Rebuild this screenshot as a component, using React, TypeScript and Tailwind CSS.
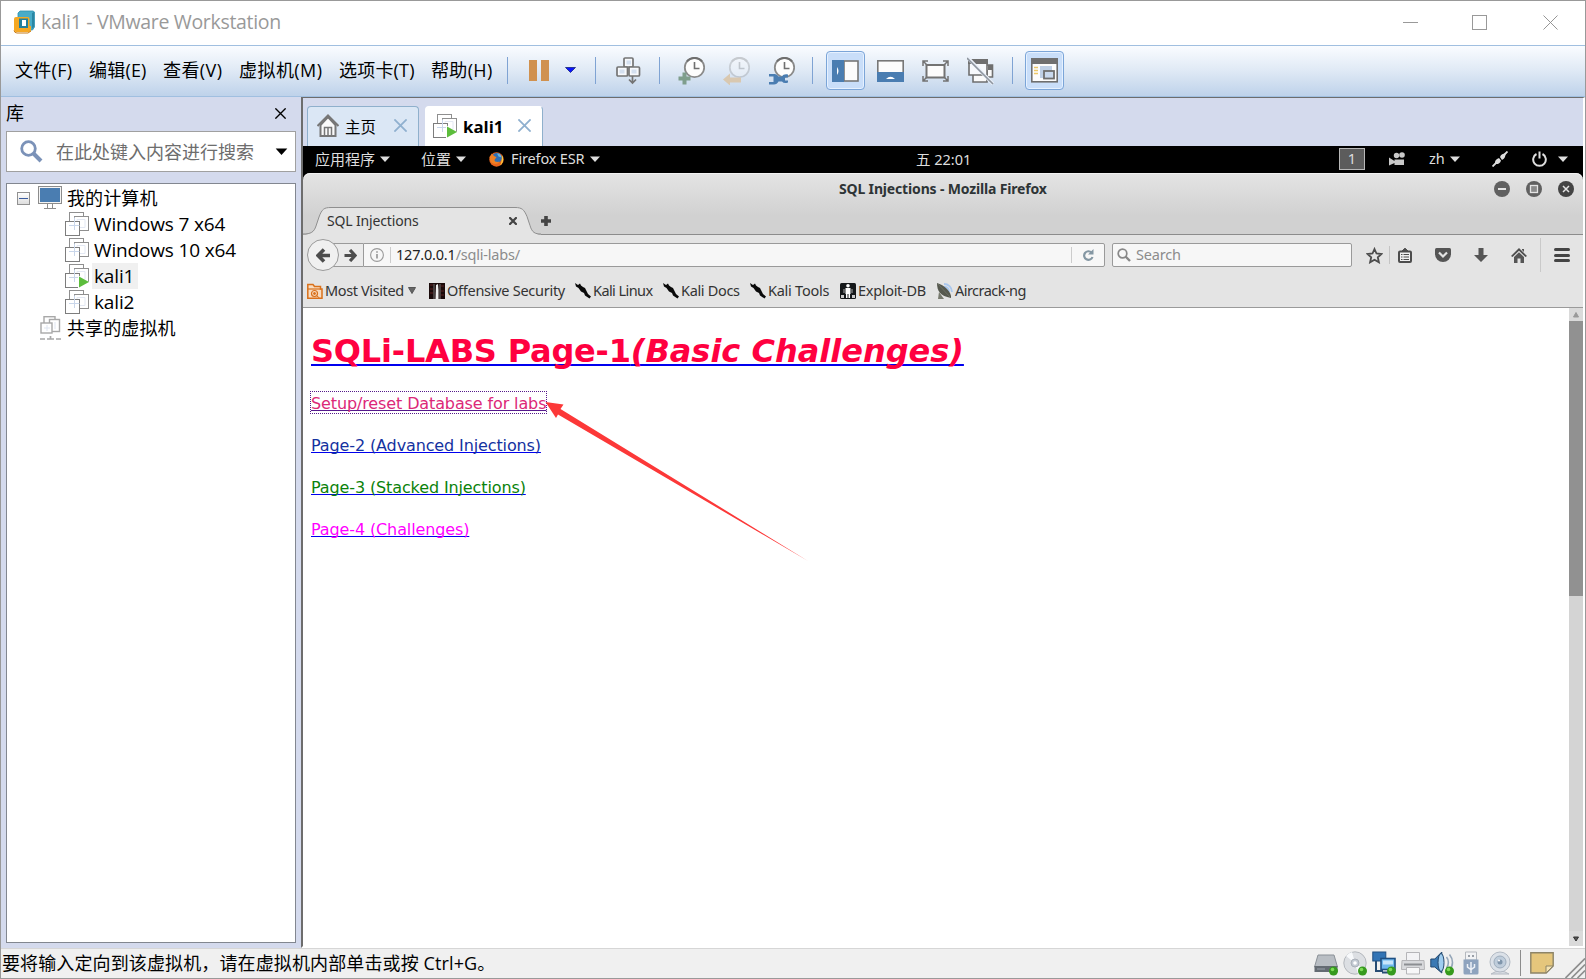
import type { ReactNode } from 'react';
import clsx from 'clsx';

const UI = "font-['Open_Sans','Noto_Sans_CJK_SC',sans-serif]";
const GTK = "font-['Noto_Sans','Noto_Sans_CJK_SC',sans-serif]";

interface IconProps {
  className?: string;
}

function Caret({ className }: IconProps) {
  return (
    <svg viewBox="0 0 10 6" className={clsx('h-[6px] w-[10px] shrink-0', className)}>
      <path d="M0 0.5h10L5 6z" fill="currentColor" />
    </svg>
  );
}

function VmwareLogo() {
  return (
    <svg viewBox="0 0 22 24" className="h-6 w-[22px] shrink-0">
      <path d="M7 1h13l1.500 1v15l-2 3H5V3z" fill="#48acc9" stroke="#2f8fae" strokeWidth="0.800" />
      <path d="M19 3l2-1v15l-2 2z" fill="#2a86a3" />
      <path d="M1 9q0-2 2-2h3v11h9v-2h3v4q0 2-2 2H3q-2 0-2-2z" fill="#f5a823" />
      <path d="M5 7h9.500q2 0 2 2v8h-3v-7H5z" fill="#f5a823" />
      <path d="M1 20.500q.5 2.500 3 2.500h11l3-2" fill="none" stroke="#c97c17" />
      <rect x="6" y="8.500" width="9" height="9.500" fill="#1f7f9e" />
      <rect x="9" y="10" width="4" height="6" fill="#fff" />
    </svg>
  );
}

function VmIcon({ running, className }: IconProps & { running?: boolean }) {
  return (
    <svg viewBox="0 0 24 24" className={clsx('h-6 w-6 shrink-0', className)}>
      <rect x="4.500" y="0.500" width="14" height="13" fill="#fff" stroke="#8f8f8f" />
      <rect x="9.500" y="4.500" width="14" height="14" fill="#fff" stroke="#8f8f8f" />
      <path d="M12 7.500h8v8h-8z" fill="none" stroke="#e3e8f3" />
      <rect x="0.500" y="9.500" width="14" height="14" fill="#fff" stroke="#7d7d7d" />
      <path d="M9.500 5.500v12.500M4 13.500h10.500" stroke="#c9d6ea" fill="none" />
      {running && <path d="M13 11v13h11v-6z" fill="#fff" />}
      {running && <path d="M14 12.500v11l10-5.500z" fill="#5cbd3c" />}
    </svg>
  );
}

function SharedIcon() {
  return (
    <svg viewBox="0 0 22 24" className="h-6 w-[22px] shrink-0" fill="#fff" stroke="#a8a8a8">
      <rect x="4" y="0.700" width="11" height="10" strokeWidth="1.400" />
      <rect x="9.500" y="3.500" width="10" height="12" strokeWidth="1.400" />
      <rect x="1" y="7" width="11" height="10" strokeWidth="1.400" />
      <path d="M7 9v6M4 12h6M15 6v7" stroke="#dfe5f0" />
      <path d="M10.500 20v3M0 23h5M7 23h7M16 23h5" strokeWidth="1.700" />
    </svg>
  );
}

function MonitorIcon() {
  return (
    <svg viewBox="0 0 24 24" className="ml-2 h-6 w-6 shrink-0">
      <rect x="0.500" y="0.500" width="23" height="17" fill="#f4f4f4" stroke="#8c8c8c" />
      <rect x="2" y="2" width="20" height="14" fill="#4a7db1" />
      <path d="M9.500 18v4M14.500 18v4M6 22.500h12" stroke="#8c8c8c" fill="none" />
    </svg>
  );
}

function Cross({ className, width = 1 }: IconProps & { width?: number }) {
  return (
    <svg viewBox="0 0 16 16" className={clsx('shrink-0', className)}>
      <path d="M0.500 0.500l15 15M15.500 0.500l-15 15" stroke="currentColor" strokeWidth={width} />
    </svg>
  );
}

function TitleBar() {
  return (
    <div className="flex h-[44px] shrink-0 items-center bg-white pb-[2px] pl-3">
      <VmwareLogo />
      <span className="ml-[6px] w-[300px] text-[19.500px] leading-6 tracking-[-0.320px] whitespace-nowrap text-[#999]">
        kali1 - VMware Workstation
      </span>
      <div className="ml-auto flex items-center pr-[27px] text-[#8f8f8f]">
        <div className="h-px w-[15px] bg-[#999]" />
        <div className="ml-[54px] h-[15px] w-[15px] border border-[#999]" />
        <Cross className="ml-[56px] h-[15px] w-[15px]" />
      </div>
    </div>
  );
}

const menus = [
  { label: '文件(F)', box: 'w-[74px] tracking-[0.300px]' },
  { label: '编辑(E)', box: 'w-[74px] tracking-[0.200px]' },
  { label: '查看(V)', box: 'w-[76px] tracking-[0.400px]' },
  { label: '虚拟机(M)', box: 'w-[100px] tracking-[0.450px]' },
  { label: '选项卡(T)', box: 'w-[92px] tracking-[0.200px]' },
  { label: '帮助(H)', box: 'w-[76px] tracking-[0.350px]' },
];

function ToolSeparator() {
  return <div className="h-[27px] w-px shrink-0 bg-[#7fa3d3]" />;
}

function Clock({ faded, children }: { faded?: boolean; children: ReactNode }) {
  return (
    <svg viewBox="0 0 27 28" className="h-7 w-[27px] shrink-0" fill="none">
      <g opacity={faded ? 0.3 : 1}>
        <circle cx="16.500" cy="10.500" r="9.700" fill="#fdfdfd" stroke="#8a8a8a" strokeWidth="1.800" />
        <path d="M9 4.500a9.700 9.700 0 0 1 15 0" stroke="#6f6f6f" strokeWidth="2" />
        <path d="M16.500 5v6.500h5" stroke="#6f6f6f" strokeWidth="1.600" />
      </g>
      {children}
    </svg>
  );
}

function ToolButton({ children }: { children: ReactNode }) {
  return (
    <div className="flex h-[39px] w-[39px] shrink-0 items-center justify-center rounded-[4px] border border-[#7ba5d8] bg-[#c9def9] shadow-[inset_0_0_0_1px_#e6f1ff]">
      {children}
    </div>
  );
}

function MenuBar() {
  return (
    <div className="flex h-[52px] shrink-0 items-center border-y border-[#a0bfe0] bg-linear-to-b from-[#fafcff] via-[#dfe9f5] to-[#bed2ea] pb-px pl-[14px]">
      {menus.map((menu) => (
        <span
          key={menu.label}
          className={clsx('-mt-[2px] shrink-0 text-[18px] leading-6 whitespace-nowrap text-black', menu.box)}
        >
          {menu.label}
        </span>
      ))}
      <ToolSeparator />
      <div className="ml-[21px] flex w-5 shrink-0 justify-between">
        <div className="h-[21px] w-2 bg-[#d0914f]" />
        <div className="h-[21px] w-2 bg-[#d0914f]" />
      </div>
      <svg viewBox="0 0 11 6" className="-mt-[2px] ml-4 h-[6px] w-[11px] shrink-0">
        <path d="M0.500 0.500h10l-5 5z" fill="#0a14ff" stroke="#14237e" strokeWidth="0.800" />
      </svg>
      <div className="ml-[19px]">
        <ToolSeparator />
      </div>
      <svg viewBox="0 0 25 28" className="ml-5 h-7 w-[25px] shrink-0" fill="#f7f9fc" stroke="#747474" strokeWidth="1.700">
        <rect x="8" y="1" width="9" height="9" rx="1" />
        <rect x="1" y="10" width="10.500" height="9" rx="1" />
        <rect x="13" y="10" width="10.500" height="9" rx="1" />
        <path d="M10.500 3.500h4.500v4h-4.500zM3.500 12.500h5v4h-5zM15.500 12.500h5v4h-5z" fill="#d4e0f0" stroke="none" />
        <path d="M16.500 19v7M13 22.500l3.500 3.500 3.500-3.500" fill="none" />
      </svg>
      <div className="ml-[18px]">
        <ToolSeparator />
      </div>
      <div className="ml-[18px] flex gap-[18px]">
        <Clock>
          <path d="M4.500 15.500h4v4h4v4h-4v4h-4v-4h-4v-4h4z" fill="#7f9e8c" />
        </Clock>
        <Clock faded>
          <path d="M0 22.500l7-6v4h11v5H7v3z" fill="#d9c8b0" />
        </Clock>
        <Clock>
          <path
            d="M1 17h6q2.500.5 3.500 2.500h3.500c1-2 3-2.500 6-2v3h-3v3h3v2q-4 1.500-6-1h-3.500Q9 27.500 6 27.500H1v-2.500h4.500v-5.500H1z"
            fill="#4a7db1"
          />
        </Clock>
      </div>
      <div className="ml-[17px]">
        <ToolSeparator />
      </div>
      <div className="ml-[13px]">
        <ToolButton>
          <svg viewBox="0 0 27 22" className="h-[22px] w-[27px]">
            <rect x="12" y="1" width="14" height="20" fill="#fcfcfc" stroke="#777" strokeWidth="1.600" />
            <path d="M0 0h12v22H0z" fill="#4a7db1" />
            <path d="M5 7q3 4 0 8z" fill="#fff" />
          </svg>
        </ToolButton>
      </div>
      <svg viewBox="0 0 27 22" className="ml-[12px] h-[22px] w-[27px] shrink-0">
        <rect x="0.800" y="0.800" width="25.400" height="13" fill="#fcfcfc" stroke="#777" strokeWidth="1.600" />
        <path d="M0 12h27v10H0z" fill="#4a7db1" />
        <path d="M9 19q4.500-4.500 9 0z" fill="#fff" />
      </svg>
      <svg viewBox="0 0 27 22" className="ml-[18px] h-[22px] w-[27px] shrink-0" fill="none" stroke="#737373">
        <rect x="4.500" y="5" width="18" height="12.500" fill="#fcfcfc" strokeWidth="2" />
        <path d="M1 6V1h5M1 1l4 4M21 1h5v5M26 1l-4 4M1 16v5h5M1 21l4-4M21 21h5v-5M26 21l-4-4" strokeWidth="1.500" />
      </svg>
      <svg viewBox="0 0 27 28" className="ml-[18px] h-7 w-[27px] shrink-0">
        <path d="M18 8h7.500v12H18z" fill="#fafafa" stroke="#6f6f6f" strokeWidth="1.600" />
        <path d="M6 14h14v11H6z" fill="#fafafa" stroke="#6f6f6f" strokeWidth="1.600" />
        <path d="M2 3h18v15H2z" fill="#f7f9fc" stroke="#6f6f6f" strokeWidth="1.600" />
        <path d="M1 2h20v5H1zM21 8h5v5h-5z" fill="#6f6f6f" />
        <path d="M0 0l26 27" stroke="#e9eff8" strokeWidth="3.500" />
        <path d="M0 1l26 26" stroke="#8e959e" strokeWidth="1.600" />
      </svg>
      <div className="ml-[18px]">
        <ToolSeparator />
      </div>
      <div className="ml-3">
        <ToolButton>
          <svg viewBox="0 0 27 25" className="h-[25px] w-[27px]">
            <rect x="0.800" y="0.800" width="25.400" height="23" fill="#fcfcfc" stroke="#6f6f6f" strokeWidth="1.600" />
            <path d="M0 0h27v6H0z" fill="#6f6f6f" />
            <path d="M3 9.500h4M3 12.500h4M3 15.500h4" stroke="#ecc768" strokeWidth="1.600" />
            <path d="M9 8h12v12H9z" fill="#bfd0e6" />
            <rect x="13" y="13" width="10" height="7.500" fill="#c9d9ee" stroke="#6f6f6f" strokeWidth="1.800" />
          </svg>
        </ToolButton>
      </div>
    </div>
  );
}

const machines = [
  { name: 'Windows 7 x64' },
  { name: 'Windows 10 x64' },
  { name: 'kali1', running: true },
  { name: 'kali2' },
];

function Library() {
  return (
    <div className="flex w-[300px] shrink-0 flex-col pr-[5px] pb-[5px] pl-[5px]">
      <div className="flex h-[34px] shrink-0 items-center justify-between pr-[10px] pb-[2px]">
        <span className="text-[18px] leading-6 text-black">库</span>
        <Cross className="h-[11px] w-[11px]" width={2} />
      </div>
      <div className="flex h-[41px] shrink-0 items-center border border-[#a0a0a0] bg-white pr-[7px] pl-[13px]">
        <svg viewBox="0 0 23 23" className="h-[23px] w-[23px]" fill="none">
          <circle cx="8.500" cy="8.500" r="6.800" stroke="#7b92b8" strokeWidth="2.800" />
          <path d="M13.500 13.500l7.500 7.500" stroke="#7b92b8" strokeWidth="4" />
        </svg>
        <span className="ml-[13px] text-[18px] leading-6 whitespace-nowrap text-[#6d6d6d]">
          在此处键入内容进行搜索
        </span>
        <Caret className="ml-auto h-[7px] w-[13px]" />
      </div>
      <div className="mt-[11px] flex grow flex-col border border-[#828790] bg-white pt-[1px] text-[19px] leading-[26px] tracking-[-0.150px] whitespace-nowrap text-black">
        <div className="flex h-[26px] items-center pl-[10px]">
          <div className="mt-px flex h-[13px] w-[13px] items-center justify-center border border-[#919191] bg-linear-to-b from-white to-[#dedede]">
            <div className="h-px w-[9px] bg-[#3c5da0]" />
          </div>
          <MonitorIcon />
          <span className="ml-[5px] text-[18px] tracking-[0.100px]">我的计算机</span>
        </div>
        {machines.map((machine) => (
          <div key={machine.name} className="flex h-[26px] items-center pl-[58px]">
            <VmIcon running={machine.running} />
            <span className={clsx('ml-[3px] pr-[4px] pl-[2px]', machine.running && 'bg-[#f0f0f0]')}>
              {machine.name}
            </span>
          </div>
        ))}
        <div className="flex h-[26px] items-center pl-[33px]">
          <SharedIcon />
          <span className="ml-[5px] text-[18px] tracking-[0.100px]">共享的虚拟机</span>
        </div>
      </div>
    </div>
  );
}

function VmTabs() {
  return (
    <div className="flex h-[48px] shrink-0 items-end bg-[#d4daed] pl-[4px] text-black">
      <div className="flex h-[40px] w-[112px] items-center rounded-t-[4px] border border-b-0 border-[#8fb0cc] bg-[#dbe7f5] pl-[9px]">
        <svg viewBox="0 0 22 23" className="-mt-[2px] h-[23px] w-[22px] shrink-0" stroke="#777">
          <path d="M3.500 11v11h15V11L11 3z" fill="#fafafa" strokeWidth="2" />
          <path d="M0.500 12L11 1.500 21.500 12" fill="none" strokeWidth="2" />
          <path d="M7.500 22v-8.500h7V22M11 13v9" fill="none" strokeWidth="1.500" />
        </svg>
        <span className="ml-[6px] w-[49px] text-[15.500px] leading-6 whitespace-nowrap">主页</span>
        <Cross className="-mt-[2px] h-[13px] w-[13px] text-[#8fb0cf]" width={2.200} />
      </div>
      <div className="ml-[6px] flex h-[40px] w-[118px] items-center rounded-t-[4px] border border-b-0 border-white border-r-[#8fb0cc] bg-white pl-[7px]">
        <VmIcon running className="-mt-px" />
        <span className="ml-[6px] w-[55px] pt-px text-[16.800px] leading-6 font-bold">kali1</span>
        <Cross className="-mt-[2px] h-[13px] w-[13px] text-[#8fb0cf]" width={2.200} />
      </div>
    </div>
  );
}

function FirefoxIcon() {
  return (
    <svg viewBox="0 0 15 15" className="h-[15px] w-[15px] shrink-0">
      <circle cx="7.500" cy="7.500" r="7.200" fill="#e8631c" />
      <circle cx="7.800" cy="6" r="5" fill="#2e6fb4" />
      <path d="M8 1.500c3 0 4.500 2 4.500 4l-3-1z" fill="#66b5dd" />
      <path d="M13 3c2 4 1.500 8-2 10.500C12.500 11 13 8 13 3z" fill="#fcd13d" />
      <path d="M0.500 5C2 3 2.500 2.500 2.500 1.500 4 2.500 5 4.500 7.500 5 7 6.500 5.500 7 5.500 8.500c1 2 4 1.500 5 1-1 3-7 3.500-9 0z" fill="#ef8023" />
    </svg>
  );
}

function GnomeBar() {
  return (
    <div className={clsx('flex h-[27px] shrink-0 items-center bg-black pb-px text-[14.500px] leading-[24px] whitespace-nowrap text-[#dedede]', GTK)}>
      <span className="-mt-px ml-3 w-[65px] text-[15px]">应用程序</span>
      <Caret />
      <span className="-mt-px ml-[31px] w-[35px] text-[15px]">位置</span>
      <Caret />
      <div className="ml-[23px]">
        <FirefoxIcon />
      </div>
      <span className="-mt-[3px] ml-[7px] w-[79px] tracking-[-0.150px]">Firefox ESR</span>
      <Caret />
      <span className="-mt-px ml-[316px] w-[60px]">五 22:01</span>
      <div className="ml-[363px] flex h-[22px] w-[26px] shrink-0 items-center justify-center border border-[#b8b8b8] bg-[#5c5c5c] pb-[2px]">
        1
      </div>
      <svg viewBox="0 0 16 14" className="ml-6 h-[14px] w-4 shrink-0" fill="#c9c9c9">
        <circle cx="7.500" cy="3.500" r="2.700" />
        <circle cx="13" cy="3" r="2.800" />
        <path d="M5.500 7.500H15V13H5.500v-2L0 13.500v-8L5.500 9z" />
      </svg>
      <span className="-mt-[3px] ml-6 w-[21px]">zh</span>
      <Caret />
      <svg viewBox="0 0 16 16" className="ml-8 h-4 w-4 shrink-0">
        <path d="M0.500 15.500L4 12M12 4l3.500-3.500" stroke="#dedede" strokeWidth="1.800" />
        <path d="M3 13c-.5-3 1-5 4-6l2 2.500c-1 3-3 4-6 3.500zM8 6c1-3 3-3.500 5.500-3.500C13.500 5.500 13 7.500 10 9z" fill="#dedede" />
      </svg>
      <svg viewBox="0 0 15 16" className="ml-6 h-4 w-[15px] shrink-0" fill="none" stroke="#dedede" strokeWidth="2">
        <path d="M4.500 3a6.300 6.300 0 1 0 6 0M7.500 0.500v7" />
      </svg>
      <Caret className="ml-[11px]" />
    </div>
  );
}

function BrowserTitle() {
  return (
    <div className="bg-black">
      <div className="flex h-[62px] flex-col rounded-t-[7px] border-b border-[#8c8c8c] bg-linear-to-b from-[#e4e4e4] to-[#d1d1d1] to-70% shadow-[inset_0_1px_0_#f2f2f2]">
        <div className="flex h-[32px] shrink-0 items-center">
          <span className="ml-[536px] w-[212px] text-[14px] leading-5 font-bold tracking-[-0.160px] whitespace-nowrap text-[#2e3436]">
            SQL Injections - Mozilla Firefox
          </span>
          <div className="ml-auto flex gap-4 pr-[9px]">
            <svg viewBox="0 0 16 16" className="h-4 w-4">
              <circle cx="8" cy="8" r="8" fill="#606060" />
              <path d="M4 8h8" stroke="#e4e4e4" strokeWidth="2" />
            </svg>
            <svg viewBox="0 0 16 16" className="h-4 w-4">
              <circle cx="8" cy="8" r="8" fill="#606060" />
              <rect x="4.500" y="4.500" width="7" height="7" fill="#8a8a8a" stroke="#e4e4e4" strokeWidth="1.300" />
            </svg>
            <svg viewBox="0 0 16 16" className="h-4 w-4">
              <circle cx="8" cy="8" r="8" fill="#444" />
              <path d="M5 5l6 6M11 5l-6 6" stroke="#e4e4e4" strokeWidth="1.500" />
            </svg>
          </div>
        </div>
        <div className="mt-px flex h-[29px] shrink-0">
          <div className="relative h-[29px] w-[238px]">
            <svg viewBox="0 0 238 29" className="absolute inset-0 h-[29px] w-[238px]">
              <path
                d="M0 28.500c8 0 11-2 13-8l3-9C19 3 21 1.500 28 1.500h184c7 0 9 2 12 9l3 9c2 7 5 9 11 9V29H0z"
                fill="#e4e4e4"
              />
              <path
                d="M0 28c8 0 11-2 13-8l3-9C19 3 21 1.500 28 1.500h184c7 0 9 2 12 9l3 9c2 7 5 8.500 11 8.500"
                fill="none"
                stroke="#8f8f8f"
              />
            </svg>
            <div className="relative flex h-[30px] items-center pl-6">
              <span className="-mt-px w-[182px] text-[14px] leading-5 tracking-[-0.150px] whitespace-nowrap text-[#333]">SQL Injections</span>
              <Cross className="h-[8px] w-[8px] text-[#444]" width={4.500} />
            </div>
          </div>
          <svg viewBox="0 0 10 10" className="mt-[10px] h-[10px] w-[10px]">
            <path d="M5 0v10M0 5h10" stroke="#444" strokeWidth="3.600" />
          </svg>
        </div>
      </div>
    </div>
  );
}

function NavBar() {
  return (
    <div className="flex h-[40px] shrink-0 items-center text-[14.500px] leading-5 whitespace-nowrap text-[#4d4d4d]">
      <div className="z-10 ml-[4px] flex h-8 w-8 shrink-0 items-center justify-center rounded-full border border-[#9a9a9a] bg-[#f0f0f0]">
        <svg viewBox="0 0 15 15" className="h-[15px] w-[15px]" fill="none" stroke="#4d4d4d">
          <path d="M8 1.500L2 7.500l6 6M2.500 7.500H14" strokeWidth="3.600" />
        </svg>
      </div>
      <div className="-ml-[6px] flex h-[24px] w-[30px] shrink-0 items-center justify-end border-y border-[#9a9a9a] bg-[#ebebeb] pr-[6px]">
        <svg viewBox="0 0 13 13" className="h-[13px] w-[13px]" fill="none" stroke="#4d4d4d">
          <path d="M6 1l5 5.500L6 12M0.500 6.500H11" strokeWidth="3.200" />
        </svg>
      </div>
      <div className="flex h-[24px] w-[742px] shrink-0 items-center rounded-r-[2px] border border-[#9a9a9a] bg-[#f7f7f7]">
        <svg viewBox="0 0 14 14" className="ml-[6px] h-[14px] w-[14px]" fill="none" stroke="#9a9a9a">
          <circle cx="7" cy="7" r="6.400" strokeWidth="1.100" />
          <path d="M7 6v4.500M7 3.200v1.600" strokeWidth="1.700" />
        </svg>
        <div className="ml-[6px] h-4 w-px bg-[#ccc]" />
        <span className="-mt-[2px] ml-[5px] tracking-[-0.200px] text-[#8c8c8c]">
          <span className="text-[#222]">127.0.0.1</span>/sqli-labs/
        </span>
        <div className="ml-auto h-4 w-px bg-[#ccc]" />
        <svg viewBox="0 0 12 12" className="mx-[10px] h-3 w-3" fill="none" stroke="#8497a3" strokeWidth="2.200">
          <path d="M9.500 3.500A4.300 4.300 0 1 0 10.500 8" />
          <path d="M11.500 0v5.500H6z" fill="#8497a3" stroke="none" />
        </svg>
      </div>
      <div className="ml-[7px] flex h-[24px] w-[240px] shrink-0 items-center rounded-[2px] border border-[#9a9a9a] bg-[#f7f7f7]">
        <svg viewBox="0 0 14 14" className="ml-[4px] h-[14px] w-[14px]" fill="none" stroke="#888">
          <circle cx="5.500" cy="5.500" r="4.300" strokeWidth="1.700" />
          <path d="M8.500 8.500l4.500 4.500" strokeWidth="2.400" />
        </svg>
        <span className="-mt-[2px] ml-[5px] tracking-[-0.200px] text-[#8c8c8c]">Search</span>
      </div>
      <svg viewBox="0 0 17 17" className="ml-[14px] h-[17px] w-[17px] shrink-0" fill="none" stroke="#4d4d4d">
        <path d="M8.500 2l2 4.500 5 .5-3.700 3.300 1.100 5-4.400-2.600-4.400 2.600 1.100-5L1.500 7l5-.5z" strokeWidth="1.800" />
      </svg>
      <div className="ml-[6px] h-[18px] w-px bg-[#c4c4c4]" />
      <svg viewBox="0 0 14 15" className="ml-[8px] h-[15px] w-[14px] shrink-0" fill="none" stroke="#4d4d4d">
        <rect x="1" y="3.500" width="12" height="10.500" rx="1" fill="#f0f0f0" strokeWidth="2" />
        <path d="M4 3l3-2.800L10 3" fill="#4d4d4d" />
        <path d="M3 6.500h1.500M5.500 6.500H11M3 9h1.500M5.500 9H11M3 11.500h1.500M5.500 11.500H11" strokeWidth="1.100" />
      </svg>
      <svg viewBox="0 0 16 14" className="ml-[23px] h-[14px] w-4 shrink-0">
        <path d="M1.500 0h13q1.500 0 1.500 1.500V6a8 8 0 0 1-16 0V1.500Q0 0 1.500 0z" fill="#555" />
        <path d="M4 4.500l4 4 4-4" fill="none" stroke="#e4e4e4" strokeWidth="2.200" />
      </svg>
      <svg viewBox="0 0 14 14" className="ml-[23px] h-[14px] w-[14px] shrink-0" fill="#555">
        <path d="M4.500 0h5v7H14l-7 7-7-7h4.500z" />
      </svg>
      <svg viewBox="0 0 16 15" className="ml-[23px] h-[15px] w-4 shrink-0">
        <path d="M8 0l8 8-1.500 1L8 2.800 1.500 9 0 8z" fill="#4d4d4d" />
        <path d="M3 9l5-4.800L13 9v6H9.500v-4.500h-3V15H3zM11 1h2v3l-2-2z" fill="#555" />
      </svg>
      <div className="ml-[13px] h-[34px] w-px bg-[#c9c9c9]" />
      <div className="ml-[13px] flex h-[14px] w-4 flex-col justify-between">
        <div className="h-[3px] rounded-sm bg-[#444]" />
        <div className="h-[3px] rounded-sm bg-[#444]" />
        <div className="h-[3px] rounded-sm bg-[#444]" />
      </div>
    </div>
  );
}

function KaliIcon() {
  return (
    <svg viewBox="0 0 16 16" className="h-4 w-4 shrink-0">
      <path d="M0 0l3 2 2-1.500 1 2L8 4l2 1 2 4 1 2 3 2.500-1.500 2L10 12.500 9 10 6 8.500 3.500 5 1 3.500z" fill="#0a0a0a" />
    </svg>
  );
}

function MostVisitedIcon() {
  return (
    <svg viewBox="0 0 16 16" className="h-4 w-4 shrink-0" fill="none" stroke="#d9701a">
      <path d="M0.800 15.200V1.500H6l1.500 2h6V6H15v9.200z" fill="#f8dcc0" strokeWidth="1.500" />
      <path d="M1 6h13" strokeWidth="1.200" />
      <circle cx="7.500" cy="10.500" r="3" strokeWidth="1.200" />
      <circle cx="7.500" cy="10.500" r="1" fill="#d9701a" />
      <path d="M10 13l2.500 2" />
    </svg>
  );
}

function OffensiveIcon() {
  return (
    <svg viewBox="0 0 16 16" className="h-4 w-4 shrink-0">
      <path d="M0 0h16v16H0z" fill="#1a0a0a" />
      <path d="M1 2h3M1 6h3M1 10h3M12 3h3M12 8h3M12 12h3" stroke="#5b2020" />
      <path d="M5 1v15M11 1v15" stroke="#777" />
      <path d="M7 2l2-1 .5 6v9H6.500z" fill="#eee" />
    </svg>
  );
}

function ExploitIcon() {
  return (
    <svg viewBox="0 0 16 16" className="h-4 w-4 shrink-0">
      <rect width="16" height="16" rx="1.500" fill="#15181a" />
      <circle cx="8" cy="2.800" r="1.800" fill="#fff" />
      <path d="M5.500 5h5v6H10v4H8.500v-4h-1v4H6v-4h-.5z" fill="#fff" />
      <path d="M1 12h3v3H1zM12 12h3v3h-3z" fill="#ccc" />
      <path d="M4 6v4M12 6v4" stroke="#aaa" />
    </svg>
  );
}

function AircrackIcon() {
  return (
    <svg viewBox="0 0 16 16" className="h-4 w-4 shrink-0">
      <path d="M7 1c4 0 8 3 8 8M7 4c3 0 5 2 5 5" fill="none" stroke="#a9c7ee" strokeWidth="1.800" />
      <path d="M0 0c0 8 3 13 14 15C15 9 7 2 0 0z" fill="#55584e" />
      <path d="M2 9l-1 7h6z" fill="#777a6e" />
      <path d="M1 1l12 13" stroke="#6c6f63" />
    </svg>
  );
}

const bookmarks = [
  { label: 'Most Visited', box: 'w-[104px] tracking-[-0.380px]', icon: <MostVisitedIcon /> },
  { label: 'Offensive Security', box: 'w-[128px] tracking-[-0.270px]', icon: <OffensiveIcon /> },
  { label: 'Kali Linux', box: 'w-[70px] tracking-[-0.580px]', icon: <KaliIcon /> },
  { label: 'Kali Docs', box: 'w-[69px] tracking-[-0.330px]', icon: <KaliIcon /> },
  { label: 'Kali Tools', box: 'w-[72px] tracking-[-0.250px]', icon: <KaliIcon /> },
  { label: 'Exploit-DB', box: 'w-[79px] tracking-[-0.300px]', icon: <ExploitIcon /> },
  { label: 'Aircrack-ng', box: 'w-[80px] tracking-[-0.540px]', icon: <AircrackIcon /> },
];

function Bookmarks() {
  return (
    <div className="flex h-[33px] shrink-0 items-center border-b border-[#9a9a9a] pb-[1px] pl-[4px] text-[14.500px] leading-5 whitespace-nowrap text-[#333]">
      {bookmarks.map(({ label, box, icon }, index) => (
        <div key={label} className="flex items-center">
          {icon}
          <span className={clsx('-mt-[2px] ml-[2px] flex items-center', box)}>
            {label}
            {index === 0 && (
              <svg viewBox="0 0 8 7" className="mt-[2px] ml-[4px] h-[7px] w-2">
                <path d="M0.500 0.500h7l-3.500 6z" fill="#666" stroke="#555" />
              </svg>
            )}
          </span>
        </div>
      ))}
    </div>
  );
}

function LabPage() {
  return (
    <div className="relative flex min-h-0 grow bg-white">
      <div className="grow pl-2 font-['DejaVu_Sans',sans-serif] text-[16px] leading-[19px] tracking-[-0.120px] whitespace-nowrap">
        <h1 className="mt-[25px] text-[32px] leading-[37px] font-bold tracking-[-0.200px] text-[#ff0040] underline decoration-[#0000ee] decoration-2 underline-offset-[2px] [text-decoration-skip-ink:none]">
          SQLi-LABS Page-1<i className="tracking-[-0.010px]">(Basic Challenges)</i>
        </h1>
        <div className="mt-[24px] flex flex-col items-start gap-[23px] [text-decoration-skip-ink:none]">
          <a className="-mt-[2px] pt-[2px] text-[#dc2878] underline decoration-[#551a8b] outline-1 outline-[#551a8b] outline-dotted">Setup/reset Database for labs</a>
          <a className="text-[#1432a0] underline decoration-[#0000ee]">Page-2 (Advanced Injections)</a>
          <a className="text-[#0a820a] underline decoration-[#0000ee]">Page-3 (Stacked Injections)</a>
          <a className="text-[#ff00ff] underline decoration-[#0000ee]">Page-4 (Challenges)</a>
        </div>
      </div>
      <svg viewBox="0 0 266 162" className="absolute top-[93px] left-[242px] h-[162px] w-[266px]">
        <path d="M0.500 1l18 2.500-3 4.500L263 160 13 13.500 11 17z" fill="#fc3838" />
      </svg>
      <div className="flex w-[14px] shrink-0 flex-col items-center bg-[#d4d4d4]">
        <svg viewBox="0 0 14 13" className="h-[13px] w-[14px] bg-[#dadada]">
          <path d="M4.500 9h5l-2.500-4.500z" fill="#999" stroke="#999" />
        </svg>
        <div className="h-[275px] w-full bg-[#919191]" />
        <svg viewBox="0 0 14 13" className="mt-auto h-[15px] w-[14px] bg-[#dadada]">
          <path d="M4.500 5h5l-2.500 4z" fill="#555" stroke="#333" />
        </svg>
      </div>
    </div>
  );
}

function GreenDot() {
  return (
    <>
      <circle cx="19.500" cy="20" r="4.500" fill="#369a1e" />
      <circle cx="18.500" cy="18.500" r="1.800" fill="#7fdb57" />
    </>
  );
}

function StatusBar() {
  return (
    <div className="flex h-[30px] shrink-0 items-center bg-[#f0f0f0] pl-[1px] shadow-[inset_0_1px_0_#d6d6d6]">
      <span className="text-[18px] leading-6 tracking-[0.120px] whitespace-nowrap text-black">
        要将输入定向到该虚拟机，请在虚拟机内部单击或按 Ctrl+G。
      </span>
      <div className="ml-auto flex shrink-0 items-center gap-[5px]">
        <svg viewBox="0 0 24 25" className="h-[25px] w-6">
          <path d="M4 4h16l3.500 12H0.500z" fill="#b9bec4" stroke="#8a9097" />
          <path d="M0.500 15h23v6h-23z" fill="#646b73" />
          <path d="M3 18h8" stroke="#9aa3ad" />
          <GreenDot />
        </svg>
        <svg viewBox="0 0 24 25" className="h-[25px] w-6">
          <circle cx="12" cy="12" r="11.200" fill="#dcdfe3" stroke="#b4b8bd" />
          <path d="M12 12L3 5a11 11 0 0 1 6-4zM12 12l9 6a11 11 0 0 1-6 5z" fill="#f7f9fb" />
          <circle cx="12" cy="12" r="4" fill="#c3cad3" stroke="#aab0b8" />
          <circle cx="12" cy="12" r="1.800" fill="#fff" />
          <GreenDot />
        </svg>
        <svg viewBox="0 0 24 25" className="h-[25px] w-6">
          <rect x="0.800" y="1" width="13" height="9" fill="#3274b5" stroke="#1e4f82" />
          <path d="M4 10v10h7" fill="none" stroke="#274c74" strokeWidth="2" />
          <rect x="9" y="7.500" width="14" height="11" fill="#6db7ee" stroke="#1e4f82" strokeWidth="1.600" />
          <path d="M11 9.500h10v4H11z" fill="#c7e5fb" />
          <path d="M10 21.500h8" stroke="#274c74" strokeWidth="2" />
          <GreenDot />
        </svg>
        <svg viewBox="0 0 24 25" className="h-[25px] w-6" stroke="#b5b5b8">
          <path d="M5.500 10V1.500h13V10" fill="#f3f3f5" />
          <path d="M1 9.500h22l.5 9H0.500z" fill="#d8d9dc" />
          <path d="M3 13.500h18" stroke="#8c8e92" strokeWidth="2" />
          <path d="M5.500 16.500h13V23h-13z" fill="#f7f7f8" />
        </svg>
        <svg viewBox="0 0 24 25" className="h-[25px] w-6">
          <path d="M0.800 8h4l7-7v21l-7-6h-4z" fill="#3a79b4" stroke="#24496f" />
          <ellipse cx="11" cy="11.500" rx="3" ry="9" fill="#9fcdf0" stroke="#24496f" />
          <path d="M16.500 6c2.500 3 2.500 8 0 11M19.500 3.500c4 5 4 11 0 15" fill="none" stroke="#94a6b8" strokeWidth="1.600" />
          <GreenDot />
        </svg>
        <svg viewBox="0 0 24 25" className="h-[25px] w-6">
          <path d="M6.500 1h11v8h-11z" fill="#f2f3f5" stroke="#b4b8be" />
          <path d="M9 4h2v2H9zM13 4h2v2h-2z" fill="#9aa0a8" />
          <path d="M4.500 8.500h15V22q0 1.500-1.500 1.500H6q-1.500 0-1.500-1.500z" fill="#8ea3be" />
          <path d="M12 11v11M8.500 13v3l3.500 2.500 3.500-2.500v-3" fill="none" stroke="#edf1f7" strokeWidth="1.500" />
        </svg>
        <svg viewBox="0 0 24 25" className="h-[25px] w-6">
          <path d="M3 23q9-6 18 0z" fill="#d9dde3" stroke="#b4bac2" />
          <circle cx="12" cy="11" r="10" fill="#dbe1e8" stroke="#b2bac4" />
          <circle cx="12" cy="11" r="6" fill="#bfcddb" stroke="#9dacbc" />
          <circle cx="12" cy="11" r="2.500" fill="#7f95ab" />
          <circle cx="11" cy="9.500" r="1" fill="#fff" />
        </svg>
      </div>
      <div className="ml-[8px] h-[26px] w-px bg-[#8c8c8c]" />
      <svg viewBox="0 0 24 22" className="ml-[9px] h-[22px] w-6 shrink-0">
        <path d="M0.800 0.800h22.400V14l-7 7H0.800z" fill="#e5c67c" stroke="#8d8467" strokeWidth="1.400" />
        <path d="M16 21v-7h7z" fill="#f5e3b0" stroke="#8d8467" />
      </svg>
      <svg viewBox="0 0 20 20" className="ml-[11px] h-5 w-5 shrink-0 self-end" stroke="#8f8f8f" strokeWidth="1.700">
        <path d="M0.500 20L20 0.500M6.500 20L20 6.500M12.500 20l7.500-7.500" />
      </svg>
    </div>
  );
}

export default function App() {
  return (
    <div className={clsx('flex h-[979px] w-[1586px] flex-col overflow-hidden border border-[#999] bg-[#d4daed]', UI)}>
      <TitleBar />
      <MenuBar />
      <div className="flex min-h-0 grow">
        <Library />
        <div className="flex min-w-0 grow flex-col border-t border-r-2 border-b-2 border-l-2 border-[#6d6d6d] border-r-white border-b-white">
          <VmTabs />
          <GnomeBar />
          <div className={clsx('flex min-h-0 grow flex-col bg-[#e4e4e4]', GTK)}>
            <BrowserTitle />
            <NavBar />
            <Bookmarks />
            <LabPage />
          </div>
        </div>
      </div>
      <StatusBar />
    </div>
  );
}
